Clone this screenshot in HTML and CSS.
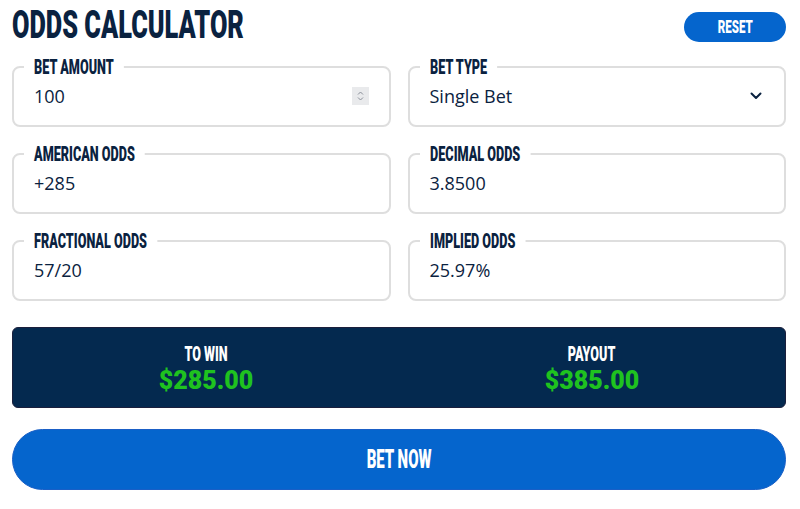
FILE: index.html
```html
<!DOCTYPE html>
<html lang="en">
<head>
<meta charset="utf-8">
<title>Odds Calculator</title>
<link rel="stylesheet" href="styles.css">
</head>
<body>
<main class="calc">
  <header class="calc-head">
    <h1 class="title"><span class="cond">Odds Calculator</span></h1>
    <button class="reset" type="button"><span class="cond">Reset</span></button>
  </header>

  <div class="fields">
    <div class="field">
      <span class="field-label"><span class="cond">Bet Amount</span></span>
      <div class="field-value">
        <span>100</span>
        <span class="spinner">
          <svg width="9" height="14" viewBox="0 0 9 14" aria-hidden="true">
            <path d="M2 5.5 L4.5 3 L7 5.5" fill="none" stroke="#8a8f99" stroke-width="1"/>
            <path d="M2 8.5 L4.5 11 L7 8.5" fill="none" stroke="#8a8f99" stroke-width="1"/>
          </svg>
        </span>
      </div>
    </div>
    <div class="field">
      <span class="field-label"><span class="cond">Bet Type</span></span>
      <div class="field-value">
        <span>Single Bet</span>
        <svg class="chevron" width="12" height="8" viewBox="0 0 12 8" aria-hidden="true">
          <path d="M1.5 1.5 L6 6 L10.5 1.5" fill="none" stroke="#0a2240" stroke-width="2" stroke-linecap="round" stroke-linejoin="round"/>
        </svg>
      </div>
    </div>
    <div class="field">
      <span class="field-label"><span class="cond">American Odds</span></span>
      <div class="field-value"><span>+285</span></div>
    </div>
    <div class="field">
      <span class="field-label"><span class="cond">Decimal Odds</span></span>
      <div class="field-value"><span>3.8500</span></div>
    </div>
    <div class="field">
      <span class="field-label"><span class="cond">Fractional Odds</span></span>
      <div class="field-value"><span>57/20</span></div>
    </div>
    <div class="field">
      <span class="field-label"><span class="cond">Implied Odds</span></span>
      <div class="field-value"><span>25.97%</span></div>
    </div>
  </div>

  <section class="results">
    <div class="result">
      <div class="result-label"><span class="cond">To Win</span></div>
      <div class="result-value">$285.00</div>
    </div>
    <div class="result">
      <div class="result-label"><span class="cond">Payout</span></div>
      <div class="result-value">$385.00</div>
    </div>
  </section>

  <button class="bet" type="button"><span class="cond">Bet Now</span></button>
</main>
</body>
</html>
```

FILE: styles.css
```css
* { box-sizing: border-box; }

html, body {
  margin: 0;
  padding: 0;
  background: #ffffff;
}

body {
  font-family: "Open Sans", "Noto Sans", sans-serif;
  color: #0a2240;
}

.calc {
  width: 774px;
  margin: 0 0 0 12px;
}

/* condensed display type (Bebas-like) */
.title,
.reset,
.field-label,
.result-label,
.bet {
  font-family: "Roboto", "Liberation Sans", sans-serif;
  font-weight: 900;
  text-transform: uppercase;
}

.cond {
  display: inline-block;
  white-space: nowrap;
  transform: scaleX(0.6);
  transform-origin: center;
}

.calc-head {
  display: flex;
  justify-content: space-between;
  align-items: flex-start;
  height: 40px;
  margin-top: 5px;
}

.title {
  margin: 0;
  font-size: 38px;
  line-height: 40px;
  color: #0a2240;
}

.title .cond {
  transform: scaleX(0.666);
  transform-origin: left center;
}

.reset {
  width: 102px;
  height: 30px;
  margin-top: 7px;
  padding: 0;
  border: 0;
  border-radius: 15px;
  background: #0565cd;
  color: #ffffff;
  font-size: 18px;
  line-height: 30px;
}

.reset .cond {
  transform: scaleX(0.64);
}

.fields {
  display: grid;
  grid-template-columns: 1fr 1fr;
  column-gap: 17px;
  row-gap: 26px;
  margin-top: 21px;
}

.field {
  position: relative;
  height: 61px;
  padding: 16px 20px 0 20px;
  border: 2px solid #dedede;
  border-radius: 8px;
}

.field-label {
  position: absolute;
  top: -11px;
  left: 10px;
  font-size: 20px;
  line-height: 20px;
  color: #0a2240;
}

.field-label .cond {
  padding: 0 16px;
  background: #ffffff;
  transform: scaleX(0.632);
  transform-origin: left center;
}

.field-value {
  display: flex;
  align-items: center;
  justify-content: space-between;
  height: 24px;
  font-size: 18px;
  line-height: 24px;
  color: #0a2240;
}

.spinner {
  display: flex;
  align-items: center;
  justify-content: center;
  width: 17px;
  height: 18px;
  background: #e9eaec;
}

.chevron {
  margin-right: 2px;
}

.results {
  display: grid;
  grid-template-columns: 1fr 1fr;
  align-items: center;
  height: 81px;
  padding-top: 2px;
  margin-top: 26px;
  background: #04294f;
  border: 1px solid #1b1f3c;
  border-radius: 6px;
}

.result {
  display: flex;
  flex-direction: column;
  align-items: center;
  gap: 4px;
}

.result-label {
  color: #ffffff;
  font-size: 21px;
  line-height: 20px;
}

.result-value {
  font-family: "Roboto", "Open Sans", sans-serif;
  color: #1fc21f;
  font-size: 25px;
  font-weight: 900;
  line-height: 26px;
}

.bet {
  display: block;
  width: 774px;
  height: 61px;
  margin-top: 21px;
  padding: 0;
  border: 1px solid #1a5fc6;
  border-radius: 31px;
  background: #0565cd;
  color: #ffffff;
  font-size: 25px;
  line-height: 59px;
}
```
